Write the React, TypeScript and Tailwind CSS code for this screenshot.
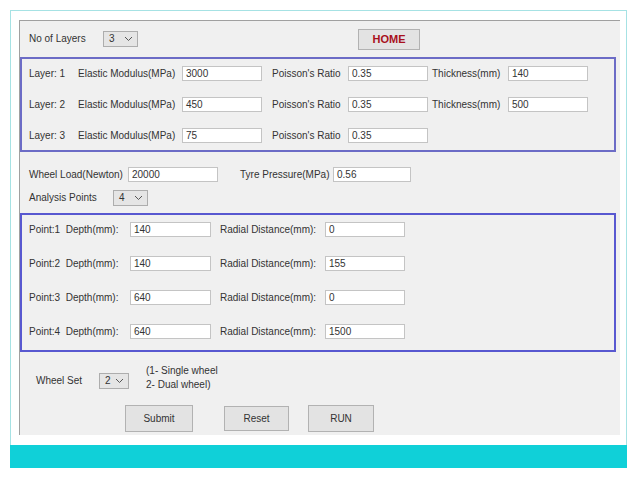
import React from "react";

const Chevron = () => (
  <svg width="9" height="6" viewBox="0 0 9 6" className="shrink-0">
    <polyline points="1,1 4.5,4.5 8,1" fill="none" stroke="#555" strokeWidth="1" />
  </svg>
);

const Select = ({ v, w }: { v: string; w: string }) => (
  <div className={`${w} h-[16px] shrink-0 bg-[#e5e5e5] border border-[#adadad] flex items-center justify-between pl-[5px] pr-[4px]`}>
    <span>{v}</span>
    <Chevron />
  </div>
);

const Field = ({ v, w }: { v: string; w: string }) => (
  <div className={`${w} h-[15px] shrink-0 bg-white border border-[#c4c4c4] flex items-center pl-[3px]`}>
    <span>{v}</span>
  </div>
);

const Btn = ({ t, w, h }: { t: string; w: string; h: string }) => (
  <div className={`${w} ${h} shrink-0 bg-[#e3e3e3] border border-[#b2b2b2] flex items-center justify-center`}>
    {t}
  </div>
);

export default function App() {
  const layers = [
    { n: "1", e: "3000", p: "0.35", t: "140" },
    { n: "2", e: "450", p: "0.35", t: "500" },
    { n: "3", e: "75", p: "0.35", t: null as string | null },
  ];
  const points = [
    { n: "1", d: "140", r: "0" },
    { n: "2", d: "140", r: "155" },
    { n: "3", d: "640", r: "0" },
    { n: "4", d: "640", r: "1500" },
  ];
  return (
    <div className="w-[638px] h-[478px] bg-white font-['Liberation_Sans',Arial,sans-serif] text-[10px] leading-[14px] text-[#333]">
      <div className="pt-[10px] pl-[10px]">
        <div className="w-[617px] h-[435px] border-t border-l border-r border-[#a6e2e4] pt-[9px] pl-[8px]">
          <div className="w-[601px] h-[415px] bg-[#f0f0f0] border-t border-l border-[#a0a0a0] flex flex-col">
            <div className="h-[36px] flex items-center pl-[9px]">
              <span className="w-[74px] shrink-0">No of Layers</span>
              <Select v="3" w="w-[35px]" />
              <div className="ml-[220px] w-[62px] h-[21px] bg-[#e3e3e3] border border-[#b2b2b2] flex items-center justify-center font-bold text-[11px] text-[#a8101c]">
                HOME
              </div>
            </div>
            <div className="w-[596px] border-2 border-[#6c6cc6] pt-[7px] pb-[7px] pl-[7px] flex flex-col gap-[16px]">
              {layers.map((l) => (
                <div key={l.n} className="h-[15px] flex items-center">
                  <span className="w-[49px] shrink-0">Layer: {l.n}</span>
                  <span className="w-[104px] shrink-0">Elastic Modulus(MPa)</span>
                  <Field v={l.e} w="w-[80px]" />
                  <span className="w-[86px] shrink-0 pl-[10px]">Poisson's Ratio</span>
                  <Field v={l.p} w="w-[80px]" />
                  {l.t && (
                    <>
                      <span className="w-[80px] shrink-0 pl-[4px]">Thickness(mm)</span>
                      <Field v={l.t} w="w-[80px]" />
                    </>
                  )}
                </div>
              ))}
            </div>
            <div className="mt-[15px] h-[15px] flex items-center pl-[9px]">
              <span className="w-[99px] shrink-0">Wheel Load(Newton)</span>
              <Field v="20000" w="w-[90px]" />
              <span className="w-[115px] shrink-0 pl-[22px]">Tyre Pressure(MPa)</span>
              <Field v="0.56" w="w-[78px]" />
            </div>
            <div className="mt-[8px] h-[15px] flex items-center pl-[9px]">
              <span className="w-[84px] shrink-0">Analysis Points</span>
              <Select v="4" w="w-[35px]" />
            </div>
            <div className="mt-[8px] w-[596px] border-2 border-[#5858d0] pt-[7px] pb-[11px] pl-[7px] flex flex-col gap-[19px]">
              {points.map((p) => (
                <div key={p.n} className="h-[15px] flex items-center">
                  <span className="w-[101px] shrink-0">Point:{p.n}&nbsp; Depth(mm):</span>
                  <Field v={p.d} w="w-[81px]" />
                  <span className="w-[114px] shrink-0 pl-[9px]">Radial Distance(mm):</span>
                  <Field v={p.r} w="w-[80px]" />
                </div>
              ))}
            </div>
            <div className="mt-[12px] h-[28px] flex items-start pl-[16px]">
              <span className="w-[63px] shrink-0 mt-[10px]">Wheel Set</span>
              <div className="mt-[9px]">
                <Select v="2" w="w-[30px]" />
              </div>
              <div className="ml-[17px] flex flex-col">
                <span>(1- Single wheel</span>
                <span>2- Dual wheel)</span>
              </div>
            </div>
            <div className="mt-[13px] flex items-center pl-[105px]">
              <Btn t="Submit" w="w-[68px]" h="h-[27px]" />
              <div className="ml-[31px]">
                <Btn t="Reset" w="w-[65px]" h="h-[25px]" />
              </div>
              <div className="ml-[19px]">
                <Btn t="RUN" w="w-[66px]" h="h-[27px]" />
              </div>
            </div>
          </div>
        </div>
        <div className="w-[617px] h-[23px] bg-[#10d0d8]" />
      </div>
    </div>
  );
}
